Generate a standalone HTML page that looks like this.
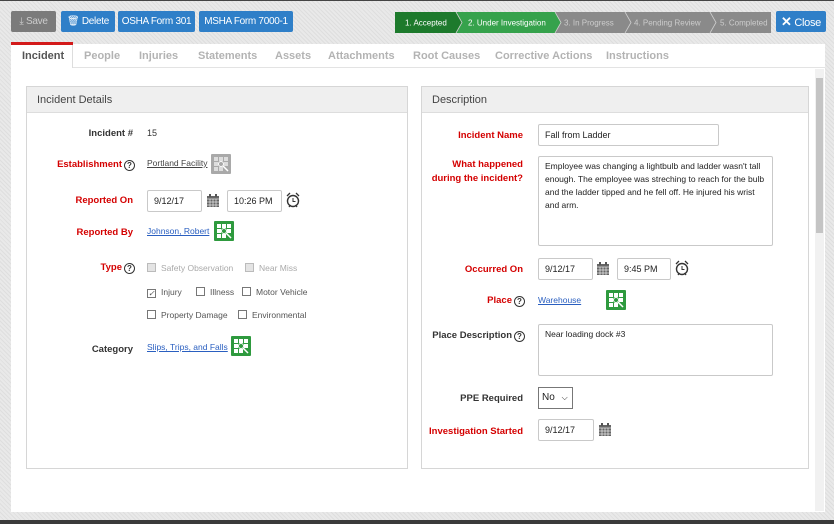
<!DOCTYPE html>
<html><head><meta charset="utf-8"><style>
*{box-sizing:border-box;margin:0;padding:0}
body{width:834px;height:524px;overflow:hidden;position:relative;font-family:"Liberation Sans",sans-serif;font-size:9px;color:#333;
background:repeating-linear-gradient(45deg,#e9e9e9 0 2px,#dedede 2px 3px);}
.a{position:absolute}
.btn{position:absolute;top:11px;height:21px;background:#2f7fc8;color:#fff;font-size:10px;line-height:21px;border-radius:2px;padding:0 3px;white-space:nowrap;letter-spacing:-0.3px;text-align:center;overflow:hidden}
.tab{position:absolute;top:50px;font-size:11px;font-weight:bold;color:#b3b3b3}
.panel{position:absolute;background:#fff;border:1px solid #d6d6d6}
.ph{height:26px;background:#efefef;border-bottom:1px solid #ddd;font-size:11px;line-height:26px;padding-left:10px;color:#444}
.lbl{position:absolute;text-align:right;font-weight:bold;font-size:9.5px;color:#333}
.red{color:#d40000}
.inp{position:absolute;background:#fff;border:1px solid #c9c9c9;border-radius:2px;font-size:9px;padding-left:6px;color:#222}
.lnk{position:absolute;color:#2a5fc0;text-decoration:underline;font-size:8.5px}
.q{display:inline-block;width:11px;height:11px;border:1.2px solid #333;border-radius:50%;font-size:8px;line-height:9px;text-align:center;color:#333;vertical-align:-1px;margin-left:2px;font-weight:bold}
.cb{position:absolute;font-size:8.5px;color:#555}
.cb i{display:inline-block;width:9px;height:9px;border:1px solid #777;vertical-align:-1px;margin-right:5px;background:#fff}
.cb.d{color:#aaa}.cb.d i{border-color:#bbb;background:#e4e4e4}
</style></head><body>
<div class="a" style="left:0;top:0;width:834px;height:1px;background:#444"></div>
<div class="a" style="left:0;top:520px;width:834px;height:4px;background:#3a3a3a"></div>
<div class="btn" style="left:11px;width:45px;background:#7b7b7b;color:#ccc">⤓ Save</div>
<div class="btn" style="left:61px;width:54px">🗑 Delete</div>
<div class="btn" style="left:118px;width:77px">OSHA Form 301</div>
<div class="btn" style="left:199px;width:94px">MSHA Form 7000-1</div>
<svg class="a" style="left:395px;top:12px" width="376" height="21">
<polygon points="0,0 61,0 67,10.5 61,21 0,21" fill="#1d7a2c"/>
<polygon points="61,0 160,0 166,10.5 160,21 61,21 67,10.5" fill="#36a24c"/>
<polygon points="160,0 230,0 236,10.5 230,21 160,21 166,10.5" fill="#8a8a8a"/>
<polygon points="230,0 315,0 321,10.5 315,21 230,21 236,10.5" fill="#8a8a8a"/>
<polygon points="315,0 376,0 376,21 315,21 321,10.5" fill="#8a8a8a"/>
<polyline points="61,0 67,10.5 61,21" fill="none" stroke="#cfcfcf" stroke-width="0.8"/>
<polyline points="160,0 166,10.5 160,21" fill="none" stroke="#cfcfcf" stroke-width="0.8"/>
<polyline points="230,0 236,10.5 230,21" fill="none" stroke="#cfcfcf" stroke-width="0.8"/>
<polyline points="315,0 321,10.5 315,21" fill="none" stroke="#cfcfcf" stroke-width="0.8"/>
<g font-family="Liberation Sans" font-size="8" fill="#fff"><text x="10" y="13.5">1. Accepted</text><text x="73" y="13.5">2. Under Investigation</text>
<text x="169" y="13.5" fill="#ccc">3. In Progress</text><text x="239" y="13.5" fill="#ccc">4. Pending Review</text><text x="325" y="13.5" fill="#ccc">5. Completed</text></g></svg>
<div class="btn" style="left:776px;width:50px;font-size:11px"><b style="font-size:13px">✕</b> Close</div>

<div class="a" style="left:11px;top:44px;width:814px;height:468px;background:#fff"></div>
<div class="a" style="left:11px;top:67px;width:814px;height:1px;background:#e3e3e3"></div>
<div class="a" style="left:11px;top:44px;width:62px;height:24px;background:#fff;border-right:1px solid #ddd"></div>
<div class="a" style="left:11px;top:42px;width:62px;height:3px;background:#d31a1a"></div>
<div class="tab" style="left:22px;color:#555">Incident</div>
<div class="tab" style="left:84px">People</div>
<div class="tab" style="left:139px">Injuries</div>
<div class="tab" style="left:198px">Statements</div>
<div class="tab" style="left:275px">Assets</div>
<div class="tab" style="left:328px">Attachments</div>
<div class="tab" style="left:413px">Root Causes</div>
<div class="tab" style="left:495px">Corrective Actions</div>
<div class="tab" style="left:606px">Instructions</div>
<div class="a" style="left:815px;top:69px;width:9px;height:442px;background:#f1f1f1"></div>
<div class="a" style="left:816px;top:78px;width:7px;height:155px;background:#c4c4c4"></div>

<div class="panel" style="left:26px;top:86px;width:382px;height:383px"><div class="ph">Incident Details</div></div>
<div class="panel" style="left:421px;top:86px;width:388px;height:383px"><div class="ph">Description</div></div>

<div class="lbl" style="left:40px;top:128px;width:93px">Incident #</div>
<div class="a" style="left:147px;top:128px;font-size:9px">15</div>
<div class="lbl red" style="left:30px;top:159px;width:105px">Establishment<span class="q">?</span></div>
<div class="a" style="left:147px;top:158px;font-size:8.5px;text-decoration:underline;color:#444">Portland Facility</div>
<svg class="a" style="left:211px;top:154px" width="20" height="20"><rect width="20" height="20" rx="1" fill="#a9a9a9"/><g fill="#ddd"><rect x="3" y="3" width="4" height="4"/><rect x="8" y="3" width="4" height="4"/><rect x="13" y="3" width="4" height="4"/><rect x="3" y="8" width="4" height="4"/><rect x="13" y="8" width="4" height="4"/><rect x="3" y="13" width="4" height="4"/><rect x="8" y="13" width="4" height="4"/></g><circle cx="10" cy="10" r="2.5" fill="none" stroke="#fff"/><line x1="12" y1="12" x2="17" y2="17" stroke="#fff" stroke-width="1.5"/></svg>

<div class="lbl red" style="left:40px;top:195px;width:93px">Reported On</div>
<div class="inp" style="left:147px;top:190px;width:55px;height:22px;line-height:20px">9/12/17</div>
<svg class="a" style="left:206px;top:193px" width="14" height="15"><rect x="1" y="3" width="12" height="11" fill="#666"/><g stroke="#fff" stroke-width="0.6"><line x1="1" y1="6" x2="13" y2="6"/><line x1="1" y1="9" x2="13" y2="9"/><line x1="1" y1="12" x2="13" y2="12"/><line x1="4" y1="6" x2="4" y2="14"/><line x1="7" y1="6" x2="7" y2="14"/><line x1="10" y1="6" x2="10" y2="14"/></g><rect x="3" y="1" width="2" height="3" fill="#555"/><rect x="9" y="1" width="2" height="3" fill="#555"/></svg>
<div class="inp" style="left:227px;top:190px;width:55px;height:22px;line-height:20px">10:26 PM</div>
<svg class="a" style="left:285px;top:192px" width="16" height="16"><circle cx="8" cy="9" r="5.5" fill="none" stroke="#333" stroke-width="1.4"/><path d="M8 6v3.5h2.5" fill="none" stroke="#333"/><path d="M2 4l3-3M14 4l-3-3M4 15l1.5-2M12 15l-1.5-2" stroke="#333" stroke-width="1.3"/></svg>

<div class="lbl red" style="left:40px;top:227px;width:93px">Reported By</div>
<div class="lnk" style="left:147px;top:226px">Johnson, Robert</div>
<svg class="a" style="left:214px;top:221px" width="20" height="20"><rect width="20" height="20" rx="1" fill="#2e9a3e"/><g fill="#fff"><rect x="3" y="3" width="4" height="4"/><rect x="8" y="3" width="4" height="4"/><rect x="13" y="3" width="4" height="4"/><rect x="3" y="8" width="4" height="4"/><rect x="13" y="8" width="4" height="4"/><rect x="3" y="13" width="4" height="4"/><rect x="8" y="13" width="4" height="4"/></g><circle cx="10" cy="10" r="2.5" fill="#2e9a3e" stroke="#fff"/><line x1="12" y1="12" x2="17" y2="17" stroke="#fff" stroke-width="1.5"/></svg>

<div class="lbl red" style="left:40px;top:262px;width:95px">Type<span class="q">?</span></div>
<div class="cb d" style="left:147px;top:263px"><i></i>Safety Observation</div>
<div class="cb d" style="left:245px;top:263px"><i></i>Near Miss</div>
<div class="cb" style="left:147px;top:287px"><i style="font-size:8px;line-height:7px;text-align:center">✓</i>Injury</div>
<div class="cb" style="left:196px;top:287px"><i></i>Illness</div>
<div class="cb" style="left:242px;top:287px"><i></i>Motor Vehicle</div>
<div class="cb" style="left:147px;top:310px"><i></i>Property Damage</div>
<div class="cb" style="left:238px;top:310px"><i></i>Environmental</div>

<div class="lbl" style="left:40px;top:344px;width:93px">Category</div>
<div class="lnk" style="left:147px;top:342px">Slips, Trips, and Falls</div>
<svg class="a" style="left:231px;top:336px" width="20" height="20"><rect width="20" height="20" rx="1" fill="#2e9a3e"/><g fill="#fff"><rect x="3" y="3" width="4" height="4"/><rect x="8" y="3" width="4" height="4"/><rect x="13" y="3" width="4" height="4"/><rect x="3" y="8" width="4" height="4"/><rect x="13" y="8" width="4" height="4"/><rect x="3" y="13" width="4" height="4"/><rect x="8" y="13" width="4" height="4"/></g><circle cx="10" cy="10" r="2.5" fill="#2e9a3e" stroke="#fff"/><line x1="12" y1="12" x2="17" y2="17" stroke="#fff" stroke-width="1.5"/></svg>

<div class="lbl red" style="left:430px;top:130px;width:93px">Incident Name</div>
<div class="inp" style="left:538px;top:124px;width:181px;height:22px;line-height:20px">Fall from Ladder</div>
<div class="lbl red" style="left:415px;top:158px;width:108px;line-height:14px">What happened<br>during the incident?</div>
<div class="inp" style="left:538px;top:156px;width:235px;height:90px;padding:3px 6px;line-height:13px;font-size:8.5px">Employee was changing a lightbulb and ladder wasn't tall enough. The employee was streching to reach for the bulb and the ladder tipped and he fell off. He injured his wrist and arm.</div>
<div class="lbl red" style="left:430px;top:264px;width:93px">Occurred On</div>
<div class="inp" style="left:538px;top:258px;width:55px;height:22px;line-height:20px">9/12/17</div>
<svg class="a" style="left:596px;top:261px" width="14" height="15"><rect x="1" y="3" width="12" height="11" fill="#666"/><g stroke="#fff" stroke-width="0.6"><line x1="1" y1="6" x2="13" y2="6"/><line x1="1" y1="9" x2="13" y2="9"/><line x1="1" y1="12" x2="13" y2="12"/><line x1="4" y1="6" x2="4" y2="14"/><line x1="7" y1="6" x2="7" y2="14"/><line x1="10" y1="6" x2="10" y2="14"/></g><rect x="3" y="1" width="2" height="3" fill="#555"/><rect x="9" y="1" width="2" height="3" fill="#555"/></svg>
<div class="inp" style="left:617px;top:258px;width:54px;height:22px;line-height:20px">9:45 PM</div>
<svg class="a" style="left:674px;top:260px" width="16" height="16"><circle cx="8" cy="9" r="5.5" fill="none" stroke="#333" stroke-width="1.4"/><path d="M8 6v3.5h2.5" fill="none" stroke="#333"/><path d="M2 4l3-3M14 4l-3-3M4 15l1.5-2M12 15l-1.5-2" stroke="#333" stroke-width="1.3"/></svg>
<div class="lbl red" style="left:430px;top:295px;width:95px">Place<span class="q">?</span></div>
<div class="lnk" style="left:538px;top:295px">Warehouse</div>
<svg class="a" style="left:606px;top:290px" width="20" height="20"><rect width="20" height="20" rx="1" fill="#2e9a3e"/><g fill="#fff"><rect x="3" y="3" width="4" height="4"/><rect x="8" y="3" width="4" height="4"/><rect x="13" y="3" width="4" height="4"/><rect x="3" y="8" width="4" height="4"/><rect x="13" y="8" width="4" height="4"/><rect x="3" y="13" width="4" height="4"/><rect x="8" y="13" width="4" height="4"/></g><circle cx="10" cy="10" r="2.5" fill="#2e9a3e" stroke="#fff"/><line x1="12" y1="12" x2="17" y2="17" stroke="#fff" stroke-width="1.5"/></svg>
<div class="lbl" style="left:415px;top:330px;width:110px">Place Description<span class="q">?</span></div>
<div class="inp" style="left:538px;top:324px;width:235px;height:52px;padding:4px 6px;font-size:8.5px">Near loading dock #3</div>
<div class="lbl" style="left:430px;top:393px;width:93px">PPE Required</div>
<div class="inp" style="left:538px;top:387px;width:35px;height:22px;line-height:20px;border-color:#777;border-radius:0;font-size:10px;padding-left:3px">No <span style="font-size:8px;margin-left:4px">⌵</span></div>
<div class="lbl red" style="left:415px;top:426px;width:108px">Investigation Started</div>
<div class="inp" style="left:538px;top:419px;width:56px;height:22px;line-height:20px">9/12/17</div>
<svg class="a" style="left:598px;top:422px" width="14" height="15"><rect x="1" y="3" width="12" height="11" fill="#666"/><g stroke="#fff" stroke-width="0.6"><line x1="1" y1="6" x2="13" y2="6"/><line x1="1" y1="9" x2="13" y2="9"/><line x1="1" y1="12" x2="13" y2="12"/><line x1="4" y1="6" x2="4" y2="14"/><line x1="7" y1="6" x2="7" y2="14"/><line x1="10" y1="6" x2="10" y2="14"/></g><rect x="3" y="1" width="2" height="3" fill="#555"/><rect x="9" y="1" width="2" height="3" fill="#555"/></svg>
</body></html>
